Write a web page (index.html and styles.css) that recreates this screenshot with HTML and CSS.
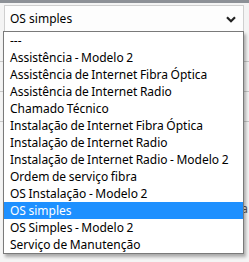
FILE: index.html
```html
<html>
<head>
<meta name="viewport" content="width=device-width, initial-scale=1.0">
<link rel="stylesheet" href="styles.css">
</head>
<body>
<div id="topbar"></div>
<div id="page">
<div class="field">
<div id="select"><span>OS simples</span>
<svg class="chevron" width="10" height="7" viewBox="0 0 10 7"><path d="M1 1.2 L5 5.2 L9 1.2" fill="none" stroke="#222" stroke-width="2.2"/></svg>
</div>
</div>
<div class="row"></div>
<div class="row"></div>
<div class="row"></div>
<div class="row last"><span class="peek">a</span></div>
</div>

<div id="list">
<div class="item">---</div>
<div class="item">Assistência - Modelo 2</div>
<div class="item">Assistência de Internet Fibra Óptica</div>
<div class="item">Assistência de Internet Radio</div>
<div class="item">Chamado Técnico</div>
<div class="item">Instalação de Internet Fibra Óptica</div>
<div class="item">Instalação de Internet Radio</div>
<div class="item">Instalação de Internet Radio - Modelo 2</div>
<div class="item">Ordem de serviço fibra</div>
<div class="item">OS Instalação - Modelo 2</div>
<div class="item selected">OS simples</div>
<div class="item">OS Simples - Modelo 2</div>
<div class="item">Serviço de Manutenção</div>
</div>
</body>
</html>
```

FILE: styles.css
```css
* {
    box-sizing: border-box;
}

body{
margin:0;
background:#fff;
font-family:"Noto Sans", "Open Sans", sans-serif;
font-size:12px;
color:#000;
}

#topbar{
height:3px;
background:#8d9197;
}

#page{
background:#f4f4f4;
height:259px;
padding-top:2px;
}

.field{
padding:0 5px 0 4px;
}

#select{
height:27px;
border:1px solid #cfcfcf;
background:#fdfdfd;
display:flex;
align-items:center;
justify-content:space-between;
padding:0 7px 0 5px;
}

.chevron{
margin-top:1px;
}

.row{
height:30px;
border-bottom:1px solid #c8c8c8;
}

.row:first-of-type{
height:65px;
}

.row.last{
height:92px;
border-bottom:none;
text-align:right;
padding-top:78px;
}

.peek{
color:#555;
padding-right:1px;
}

#list{
position:absolute;
left:3px;
top:31px;
width:241px;
border:1px solid #7a7a7a;
background:#fff;
box-shadow:2px 3px 3px rgba(0,0,0,0.3);
}

.item{
height:17px;
line-height:17px;
padding-left:6px;
white-space:nowrap;
word-spacing:-0.6px;
}

.selected{
background:#1e90ff;
color:#fff;
}
```
